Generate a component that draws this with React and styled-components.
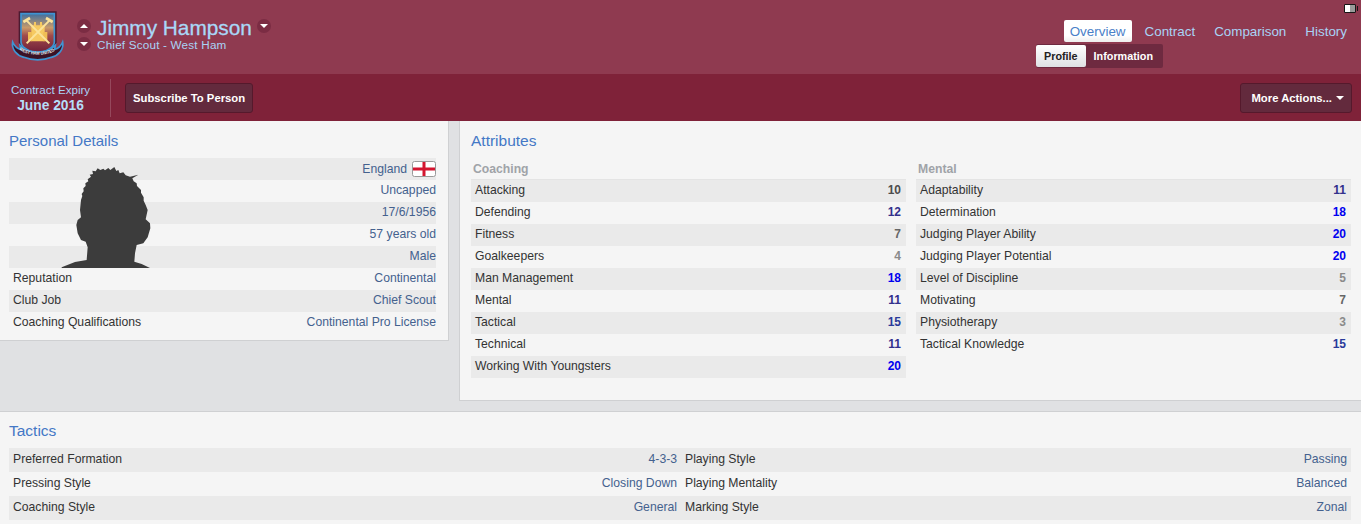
import styled, { createGlobalStyle } from "styled-components";

const GlobalStyle = createGlobalStyle`
  html, body {
    margin: 0;
    padding: 0;
    background: #e0e1e3;
    font-family: "Liberation Sans", Arial, sans-serif;
    font-size: 12.2px;
    overflow: hidden;
  }
`;

const Page = styled.div`
  width: 1361px;
  height: 524px;
  overflow: hidden;
  background: #e0e1e3;
`;

const Header = styled.header`
  position: relative;
  height: 74px;
  background: #8f3a50;
  display: flex;
  justify-content: space-between;
`;

const Identity = styled.div`
  display: flex;
  align-items: flex-start;
  padding: 8px 0 0 8px;
`;

const Crest = styled.svg`
  width: 60px;
  height: 58px;
  display: block;
`;

const Steppers = styled.div`
  display: flex;
  flex-direction: column;
  gap: 4px;
  margin: 11px 6px 0 9px;
`;

const RoundButton = styled.span`
  width: 14px;
  height: 14px;
  border-radius: 50%;
  background: #7b2c43;
  display: flex;
  align-items: center;
  justify-content: center;
`;

const NameButton = styled(RoundButton)`
  margin-top: 4px;
`;

const Caret = styled.i`
  display: block;
  width: 0;
  height: 0;
  border-left: 4px solid transparent;
  border-right: 4px solid transparent;
  ${(p) => (p.$up ? "border-bottom: 4px solid #fff;" : "border-top: 4px solid #fff;")}
`;

const NameBlock = styled.div`
  display: flex;
  flex-direction: column;
`;

const NameLine = styled.div`
  display: flex;
  align-items: center;
  gap: 5px;
`;

const Name = styled.h1`
  margin: 7px 0 0;
  font-size: 20.8px;
  line-height: 25px;
  font-weight: 400;
  color: #a9d8f7;
  -webkit-text-stroke: 0.3px #a9d8f7;
`;

const SubTitle = styled.div`
  margin-top: -2px;
  font-size: 11.7px;
  line-height: 14px;
  color: #a9d3f5;
  letter-spacing: 0.2px;
`;

const Battery = styled.div`
  position: absolute;
  top: 4px;
  right: 5px;
  width: 12px;
  height: 9px;
  border: 1px solid #161616;
  border-radius: 1px;
  background: linear-gradient(90deg, #fff 0 50%, #9a9a9a 50% 100%);
  box-sizing: border-box;
  &::after {
    content: "";
    position: absolute;
    top: 1px;
    right: -3px;
    width: 1px;
    height: 5px;
    background: #161616;
  }
`;

const NavArea = styled.nav`
  display: flex;
  flex-direction: column;
  align-items: flex-end;
  padding: 20px 8px 0 0;
`;

const Tabs = styled.div`
  display: flex;
  gap: 7px;
`;

const Tab = styled.a`
  height: 22px;
  line-height: 23px;
  padding: 0 6px;
  font-size: 13.4px;
  border-radius: 2px;
  color: ${(p) => (p.$active ? "#4a80c8" : "#a9d3f5")};
  background: ${(p) => (p.$active ? "linear-gradient(#fff 70%, #eee)" : "transparent")};
`;

const SubTabs = styled.div`
  display: flex;
  align-items: center;
  margin: 2px 190px 0 0;
  height: 24px;
  background: #6e2a40;
  border-radius: 2px;
`;

const SubTab = styled.a`
  height: 22px;
  line-height: 22px;
  padding: 0 8px;
  margin-right: ${(p) => (p.$active ? "0" : "2px")};
  font-size: 10.8px;
  font-weight: 700;
  border-radius: 2px;
  color: ${(p) => (p.$active ? "#222" : "#fff")};
  background: ${(p) => (p.$active ? "linear-gradient(#fff, #dfe1e4)" : "transparent")};
`;

const ActionBar = styled.div`
  height: 47px;
  background: #7f2239;
  display: flex;
  align-items: center;
  justify-content: space-between;
  padding-right: 9px;
`;

const ActionLeft = styled.div`
  display: flex;
  align-items: center;
`;

const Expiry = styled.div`
  width: 111px;
  height: 38px;
  margin-top: 1px;
  border-right: 1px solid #96485c;
  margin-right: 14px;
  display: flex;
  flex-direction: column;
  align-items: center;
  justify-content: center;
  padding-right: 9px;
  box-sizing: border-box;
`;

const ExpiryLabel = styled.div`
  font-size: 11.6px;
  line-height: 14px;
  color: #a9d3f5;
`;

const ExpiryValue = styled.div`
  font-size: 13.8px;
  line-height: 17px;
  font-weight: 700;
  color: #b5ddf8;
`;

const ActionButton = styled.button`
  height: 30px;
  padding: ${(p) => p.$pad || "0 7px"};
  display: flex;
  align-items: center;
  gap: 4px;
  background: #632a3d;
  border: 1px solid #55192c;
  border-radius: 3px;
  color: #fff;
  font: 700 11.3px "Liberation Sans", Arial, sans-serif;
`;

const Columns = styled.div`
  display: grid;
  grid-template-columns: 449px 1fr;
  column-gap: 10px;
  height: 280px;
`;

const Panel = styled.section`
  background: #f5f5f5;
  box-sizing: border-box;
`;

const PersonalPanel = styled(Panel)`
  height: 220px;
  padding: 0 12px 0 9px;
  border-right: 1px solid #cfd0d2;
  border-bottom: 1px solid #cfd0d2;
`;

const AttributesPanel = styled(Panel)`
  padding: 0 9px 0 11px;
  border-left: 1px solid #cfd0d2;
  border-bottom: 1px solid #cfd0d2;
`;

const Title = styled.h2`
  margin: 0;
  height: ${(p) => p.$h || 37}px;
  line-height: ${(p) => p.$lh || 40}px;
  font-size: ${(p) => p.$size || 15.5}px;
  font-weight: 400;
  color: #4478c6;
`;

const Rows = styled.div`
  position: relative;
`;

const Row = styled.div`
  height: 22px;
  padding: 0 ${(p) => p.$pr ?? 5}px ${(p) => p.$lift ?? 2}px 4px;
  box-sizing: border-box;
  display: flex;
  align-items: center;
  justify-content: space-between;
  color: #333;
  &:nth-child(odd) {
    background: #eaeaea;
  }
`;

const Value = styled.span`
  color: #44618e;
  display: flex;
  align-items: center;
  gap: 5px;
`;

const Flag = styled.svg`
  width: 24px;
  height: 16px;
  display: block;
`;

const Silhouette = styled.svg`
  position: absolute;
  left: 46px;
  top: 2px;
  width: 105px;
  height: 108px;
`;

const AttributeGrid = styled.div`
  display: grid;
  grid-template-columns: 435px 435px;
  column-gap: 10px;
`;

const GroupTitle = styled.div`
  height: 22px;
  line-height: 22px;
  padding-left: 2px;
  font-weight: 700;
  color: #a0a3a8;
  border-bottom: 1px solid #e4e4e4;
  box-sizing: border-box;
`;

const Score = styled.span`
  font-weight: 700;
  font-size: 12px;
  color: ${(p) => p.$color};
`;

const TacticsPanel = styled(Panel)`
  margin-top: 10px;
  height: 113px;
  padding: 0 10px 0 9px;
  border-top: 1px solid #cfd0d2;
`;

const TacticsRow = styled.div`
  height: 24px;
  display: grid;
  grid-template-columns: 672px 1fr;
  &:nth-child(odd) {
    background: #eaeaea;
  }
`;

const TacticsCell = styled.div`
  padding: 0 4px 2px;
  box-sizing: border-box;
  display: flex;
  align-items: center;
  justify-content: space-between;
  color: #333;
`;

const scoreColor = (n) => {
  if (n >= 18) return "#0000f0";
  if (n >= 15) return "#2a3a9a";
  if (n >= 11) return "#33308c";
  if (n >= 10) return "#4d4d4d";
  if (n >= 7) return "#666";
  return "#8a8a8a";
};

const personal = [
  ["", "England", true],
  ["", "Uncapped"],
  ["", "17/6/1956"],
  ["", "57 years old"],
  ["", "Male"],
  ["Reputation", "Continental"],
  ["Club Job", "Chief Scout"],
  ["Coaching Qualifications", "Continental Pro License"],
];

const coaching = [
  ["Attacking", 10],
  ["Defending", 12],
  ["Fitness", 7],
  ["Goalkeepers", 4],
  ["Man Management", 18],
  ["Mental", 11],
  ["Tactical", 15],
  ["Technical", 11],
  ["Working With Youngsters", 20],
];

const mental = [
  ["Adaptability", 11],
  ["Determination", 18],
  ["Judging Player Ability", 20],
  ["Judging Player Potential", 20],
  ["Level of Discipline", 5],
  ["Motivating", 7],
  ["Physiotherapy", 3],
  ["Tactical Knowledge", 15],
];

const tactics = [
  ["Preferred Formation", "4-3-3", "Playing Style", "Passing"],
  ["Pressing Style", "Closing Down", "Playing Mentality", "Balanced"],
  ["Coaching Style", "General", "Marking Style", "Zonal"],
];

// drawn in the coordinates of a 3x crop, so it scales down to 60x58
function ClubCrest() {
  return (
    <Crest viewBox="0 0 180 174">
      <defs>
        <linearGradient id="crest-fill" x1="0" y1="0" x2="0" y2="1">
          <stop offset="0" stopColor="#3f6f9f" />
          <stop offset="0.35" stopColor="#c89a6a" />
          <stop offset="0.55" stopColor="#a04a4a" />
          <stop offset="1" stopColor="#6c1c38" />
        </linearGradient>
      </defs>
      <path d="M32 10h114v92c0 20-30 34-57 42-27-8-57-22-57-42z" fill="#4c1a30" />
      <path d="M39 17h100v84c0 17-26 29-50 36-24-7-50-19-50-36z" fill="url(#crest-fill)" stroke="#3f94d2" strokeWidth="5" />
      <path d="M70 52h8v-10h6v10h12v-10h6v10h8v48H70z" fill="#f6ca62" />
      <path d="M60 72h12v28H60zM106 72h12v28h-12z" fill="#f0bd55" />
      <path d="M56 38l68 68M124 38l-68 68" stroke="#fbe39b" strokeWidth="6" />
      <path d="M46 42l20-12M134 42l-20-12" stroke="#fbe39b" strokeWidth="8" />
      <path d="M14 102c6 14 14 20 24 22l-2-12c14 14 34 20 53 20s39-6 53-20l-2 12c10-2 18-8 24-22 4 22-12 40-34 46-24 10-58 10-82 0-22-6-38-24-34-46z" fill="#3a1226" stroke="#3f94d2" strokeWidth="5" />
      <path id="crest-band" d="M32 122c18 24 98 26 118-2" fill="none" />
      <text fontFamily="Liberation Sans" fontSize="13" fontWeight="700" fill="#eee">
        <textPath href="#crest-band" startOffset="3" textLength="112" lengthAdjust="spacingAndGlyphs">WEST HAM UNITED</textPath>
      </text>
    </Crest>
  );
}

function EnglandFlag() {
  return (
    <Flag viewBox="0 0 24 16">
      <rect x="0.5" y="0.5" width="23" height="15" rx="2" fill="#fff" stroke="#9a9a9a" />
      <path d="M1 8h22M12 1v14" stroke="#d3152f" strokeWidth="3" />
    </Flag>
  );
}

function HeadShape() {
  return (
    <Silhouette viewBox="0 0 315 324">
      <path
        fill="#3c3c3c"
        d="M20 322L60 306L95 300L98 262L92 245L78 240L68 220L64 195L68 180L78 172L75 150L78 120L82 108L80 102L86 94L85 85L92 78L91 70L100 64L98 58L108 50L104 44L114 42L112 32L122 34L128 25L136 30L145 26L150 31L160 24L166 30L178 21L184 33L190 30L194 40L205 37L212 46L225 50L250 44L232 55L236 64L245 70L246 78L258 90L258 98L266 112L266 122L272 135L278 150L272 178L285 190L286 205L278 232L265 250L245 255L240 280L238 305L260 312L285 324L20 324Z"
      />
    </Silhouette>
  );
}

export default function App() {
  return (
    <Page>
      <GlobalStyle />
      <Header>
        <Identity>
          <ClubCrest />
          <Steppers>
            <RoundButton><Caret $up /></RoundButton>
            <RoundButton><Caret /></RoundButton>
          </Steppers>
          <NameBlock>
            <NameLine>
              <Name>Jimmy Hampson</Name>
              <NameButton><Caret /></NameButton>
            </NameLine>
            <SubTitle>Chief Scout - West Ham</SubTitle>
          </NameBlock>
        </Identity>
        <NavArea>
          <Tabs>
            <Tab $active>Overview</Tab>
            <Tab>Contract</Tab>
            <Tab>Comparison</Tab>
            <Tab>History</Tab>
          </Tabs>
          <SubTabs>
            <SubTab $active>Profile</SubTab>
            <SubTab>Information</SubTab>
          </SubTabs>
        </NavArea>
        <Battery />
      </Header>

      <ActionBar>
        <ActionLeft>
          <Expiry>
            <ExpiryLabel>Contract Expiry</ExpiryLabel>
            <ExpiryValue>June 2016</ExpiryValue>
          </Expiry>
          <ActionButton>Subscribe To Person</ActionButton>
        </ActionLeft>
        <ActionButton $pad="0 7px 0 10px">
          More Actions...
          <Caret />
        </ActionButton>
      </ActionBar>

      <Columns>
        <PersonalPanel>
          <Title $size={15}>Personal Details</Title>
          <Rows>
            {personal.map(([label, value, flag]) => (
              <Row key={value} $pr={0} $lift={flag ? 0 : 2}>
                <span>{label}</span>
                <Value>
                  {value}
                  {flag && <EnglandFlag />}
                </Value>
              </Row>
            ))}
            <HeadShape />
          </Rows>
        </PersonalPanel>

        <AttributesPanel>
          <Title>Attributes</Title>
          <AttributeGrid>
            <div>
              <GroupTitle>Coaching</GroupTitle>
              <Rows>
                {coaching.map(([label, n]) => (
                  <Row key={label}>
                    {label}
                    <Score $color={scoreColor(n)}>{n}</Score>
                  </Row>
                ))}
              </Rows>
            </div>
            <div>
              <GroupTitle>Mental</GroupTitle>
              <Rows>
                {mental.map(([label, n]) => (
                  <Row key={label}>
                    {label}
                    <Score $color={scoreColor(n)}>{n}</Score>
                  </Row>
                ))}
              </Rows>
            </div>
          </AttributeGrid>
        </AttributesPanel>
      </Columns>

      <TacticsPanel>
        <Title $h={36} $lh={38}>Tactics</Title>
        <Rows>
          {tactics.map(([a, b, c, d]) => (
            <TacticsRow key={a}>
              <TacticsCell>
                {a}
                <Value>{b}</Value>
              </TacticsCell>
              <TacticsCell>
                {c}
                <Value>{d}</Value>
              </TacticsCell>
            </TacticsRow>
          ))}
        </Rows>
      </TacticsPanel>
    </Page>
  );
}
